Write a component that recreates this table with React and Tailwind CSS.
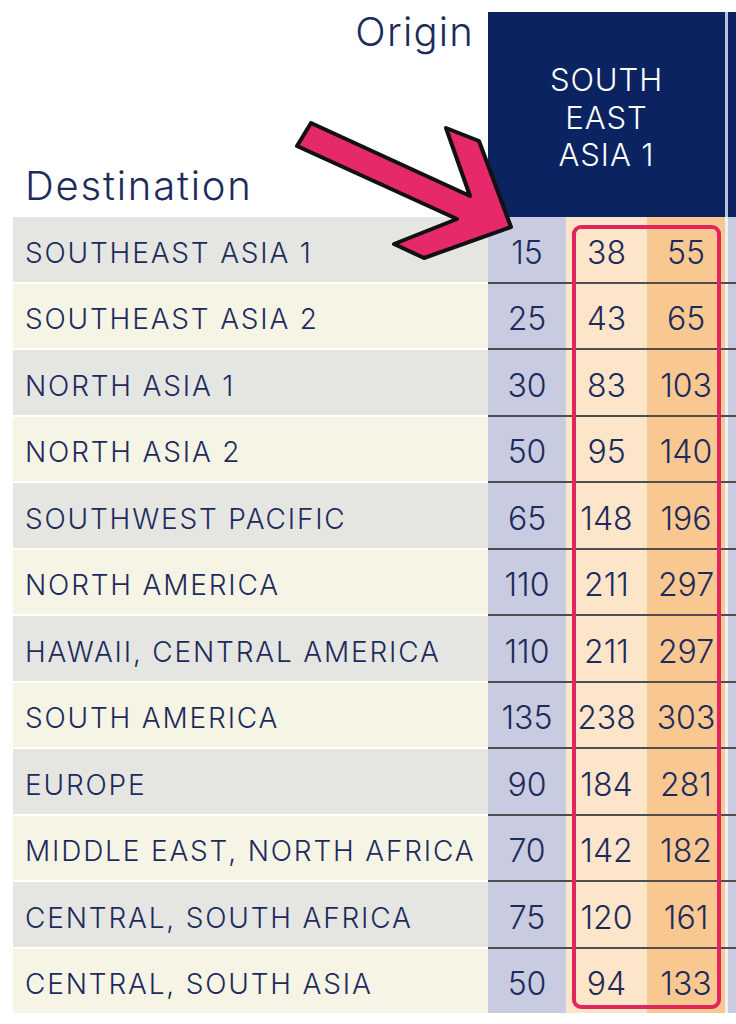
const rows = [
  ["SOUTHEAST ASIA 1", 15, 38, 55],
  ["SOUTHEAST ASIA 2", 25, 43, 65],
  ["NORTH ASIA 1", 30, 83, 103],
  ["NORTH ASIA 2", 50, 95, 140],
  ["SOUTHWEST PACIFIC", 65, 148, 196],
  ["NORTH AMERICA", 110, 211, 297],
  ["HAWAII, CENTRAL AMERICA", 110, 211, 297],
  ["SOUTH AMERICA", 135, 238, 303],
  ["EUROPE", 90, 184, 281],
  ["MIDDLE EAST, NORTH AFRICA", 70, 142, 182],
  ["CENTRAL, SOUTH AFRICA", 75, 120, 161],
  ["CENTRAL, SOUTH ASIA", 50, 94, 133],
];

const App = () => {
  return (
    <div
      className="relative w-[736px] h-[1024px] overflow-hidden bg-white text-[#1d2b5c]"
      style={{ fontFamily: "Inter, 'Open Sans', sans-serif" }}
    >
      {/* header */}
      <div className="flex h-[217px]">
        <div className="ml-[13px] w-[475px] flex flex-col justify-between">
          <p className="mt-[12px] pr-[14px] text-right text-[40px] leading-none font-light tracking-[0.03em]">
            Origin
          </p>
          <p className="pl-[12px] pb-[11px] text-[40px] leading-none font-light tracking-[0.045em]">
            Destination
          </p>
        </div>
        <div className="mt-[12px] w-[237px] bg-[#0b2361] flex flex-col items-center justify-center pt-[6px] text-white text-[31px] leading-[37.5px] font-light tracking-[0.03em] text-center">
          <span>SOUTH</span>
          <span>EAST</span>
          <span>ASIA 1</span>
        </div>
        <div className="mt-[12px] w-[3px] bg-[#b9c3da]" />
        <div className="mt-[12px] flex-1 bg-[#0b2361]" />
      </div>

      {/* rows */}
      <div className="flex flex-col">
        {rows.map(([name, a, b, c], i) => {
          const first = i === 0;
          const line = first ? "" : "border-t-2 border-[#4e4e4e]";
          return (
            <div
              key={name}
              className={"flex " + (first ? "h-[64.5px]" : "h-[66.5px]")}
            >
              <div
                className={
                  "ml-[13px] w-[475px] flex items-center pl-[12px] pt-[7px] text-[28px] font-light tracking-[0.065em] whitespace-nowrap " +
                  (i % 2 === 0 ? "bg-[#e5e5e2] " : "bg-[#f6f4e5] ") +
                  (first ? "" : "border-t-2 border-white")
                }
              >
                {name}
              </div>
              <div className={"w-[78px] flex items-center justify-center pt-[7px] bg-[#c9cbe0] text-[32px] font-light " + line}>
                {a}
              </div>
              <div className={"w-[81px] flex items-center justify-center pt-[7px] bg-[#fde5ca] text-[32px] font-light " + line}>
                {b}
              </div>
              <div className={"w-[78px] flex items-center justify-center pt-[7px] bg-[#f9c891] text-[32px] font-light " + line}>
                {c}
              </div>
              <div className={"w-[3px] bg-[#eef0f6] " + line} />
              <div className={"flex-1 bg-[#c9cbe0] " + line} />
            </div>
          );
        })}
      </div>

      {/* highlight box */}
      <div className="absolute left-[572px] top-[225px] w-[149px] h-[784px] rounded-[9px] border-[4px] border-[#e2245f]" />

      {/* arrow */}
      <svg
        className="absolute left-0 top-0 pointer-events-none"
        width="736"
        height="1024"
        viewBox="0 0 736 1024"
      >
        <polygon
          points="311,123 470,196 446,128 479,141 511,227 424,258 394,244 457,219 297,146"
          fill="#e6296a"
          stroke="#111"
          strokeWidth="4"
          strokeLinejoin="round"
        />
      </svg>
    </div>
  );
};

export default App;
